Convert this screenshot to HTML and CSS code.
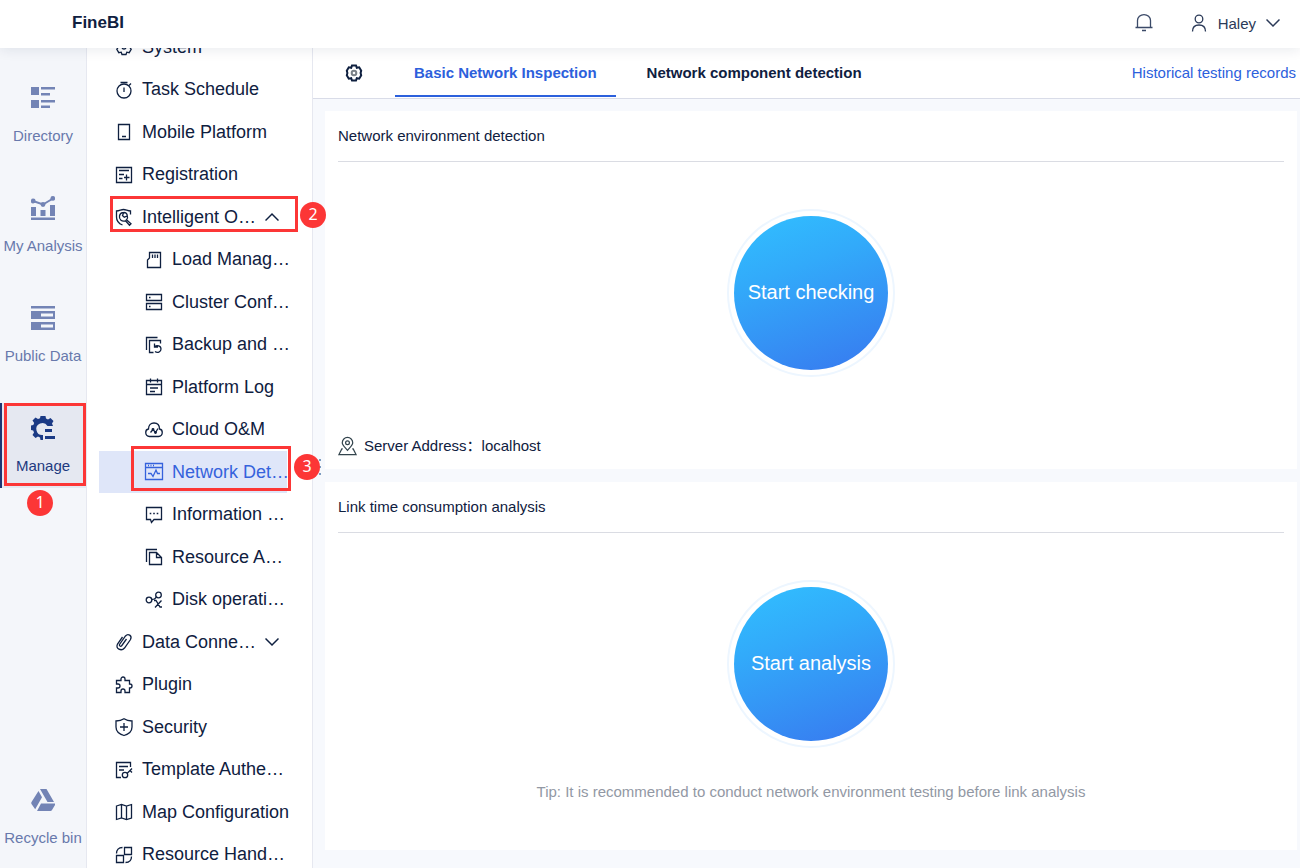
FILE: index.html
```html
<!DOCTYPE html>
<html lang="en">
<head>
  <meta charset="UTF-8">
  <meta name="viewport" content="width=device-width, initial-scale=1.0">
  <title>FineBI</title>
  <link rel="stylesheet" href="styles.css">
</head>
<body>
  <header class="header">
    <div class="brand">FineBI</div>
    <button class="bell" aria-label="Messages">
      <svg class="icon" viewBox="0 0 18 18"><path d="M2.500 13.500V6.500a6 5.500 0 0 1 13 0v7M.5 13.500h17M7 16.500h4"/></svg>
    </button>
    <button class="account">
      <svg class="icon" viewBox="0 0 18 18"><circle cx="9" cy="5" r="3.800"/><path d="M2.500 17.500c0-4 2.500-6.500 6.500-6.500s6.500 2.500 6.500 6.500"/></svg>
      <span>Haley</span>
      <svg class="arrow" viewBox="0 0 14 14"><path d="M.5 3.500 7 10l6.500-6.500"/></svg>
    </button>
  </header>

  <div class="page">
    <nav class="nav">
      <a class="nav-item" href="#directory">
        <svg viewBox="0 0 24 24"><path d="M0 1h8v8H0zM0 14h8v8H0zM10 1h14v2.500H10zM10 7h9v2.500h-9zM10 14h14v2.500H10zM10 19.500h9V22h-9z"/></svg>
        <span>Directory</span>
      </a>
      <a class="nav-item" href="#analysis">
        <svg viewBox="0 0 24 24"><path d="M0 11h5v9H0zM9.500 14h5v6h-5zM19 9h5v11h-5zM0 21.500h24V24H0z"/><circle cx="2.200" cy="5" r="2.400"/><circle cx="12" cy="8.500" r="2.400"/><circle cx="21.800" cy="2.400" r="2.400"/><path class="line" d="M2 5l10 3.500 10-6"/></svg>
        <span>My Analysis</span>
      </a>
      <a class="nav-item" href="#data">
        <svg viewBox="0 0 24 24"><path fill-rule="evenodd" d="M0 0h24v2.500H0zM0 5h24v8H0zM10 7.500v3h12v-3zM0 16h24v8H0zM10 18.500v3h12v-3z"/></svg>
        <span>Public Data</span>
      </a>
      <a class="nav-item active" href="#manage">
        <svg viewBox="0 0 24 24"><path d="M9.500 0h5l.5 2.500 2 1L19.500 2 22.500 5 21 7.500l1 2.500h-5.500a6 6 0 1 0-4.500 9v5H9.500L9 21.500l-2-1L4.500 22 1.500 19 3 16.500l-.8-2L0 14V9.500L2.300 9l.9-2L1.500 4.500l3-3L7 3l2-.8z"/><path d="M14 13h7v3h-7zM14 20h10v3H14z"/></svg>
        <span>Manage</span>
      </a>
      <a class="nav-item bottom" href="#recycle">
        <svg viewBox="0 0 24 24"><path d="M9 1h6.500L23 14h-6.500zM7.500 3l3.500 6.200-6.800 12L.5 16c-.4-.8-.4-1.200 0-2zM10 15.500h14v1.500l-3 5c-.4.700-.8 1-1.500 1H6z"/></svg>
        <span>Recycle bin</span>
      </a>
    </nav>

    <aside class="side">
      <ul class="menu">
        <li><a href="#system">
          <svg class="icon" viewBox="0 0 18 18"><path d="M7 1.500h4l.8 2.300 2.400-.5 2 3.400L14.600 9l1.600 2.300-2 3.400-2.400-.5L11 16.500H7l-.8-2.300-2.400.5-2-3.400L3.400 9 1.800 6.700l2-3.400 2.400.5z"/><circle cx="9" cy="9" r="2"/></svg>
          <span>System</span></a></li>
        <li><a href="#schedule">
          <svg class="icon" viewBox="0 0 18 18"><circle cx="9" cy="10" r="7"/><path d="M5.500 1.500h7M9 6.500v4.500M14 4.500l2-2"/></svg>
          <span>Task Schedule</span></a></li>
        <li><a href="#mobile">
          <svg class="icon" viewBox="0 0 18 18"><path d="M3.500 1.500h11v15h-11zM7 13.500h4"/></svg>
          <span>Mobile Platform</span></a></li>
        <li><a href="#registration">
          <svg class="icon" viewBox="0 0 18 18"><path d="M1.500 1.500h15v15h-15zM4 4.500h10M4 8.500h5M4 12.500h3.500M9 11.500h5.500M11.500 8.500v6"/></svg>
          <span>Registration</span></a></li>
        <li><button>
          <svg class="icon" viewBox="0 0 18 18"><path d="M15.500 6.500V3C12.500 3 11 1.500 8.500 1.500S4.500 3 1.500 3v6c0 4 2 6.500 6 8"/><path d="M8.700 4.500 7.500 7.500l1.800 1.700L12.300 8c.8 2-.2 3.300-.8 3.800l4.500 4-1.500 1.500-4-4.500C7 14 3.800 11.500 4.500 8c.4-2 2.200-3.500 4.200-3.500zM8.700 4.500c2-.2 3.500 1.200 3.600 3.500"/></svg>
          <span>Intelligent O…</span>
          <svg class="arrow" viewBox="0 0 14 14"><path d="M.5 10.500 7 4l6.500 6.500"/></svg></button></li>
        <li class="sub"><a href="#load">
          <svg class="icon" viewBox="0 0 18 18"><path d="M4.500 1.500h11v15h-13V9l2-2zM7.500 3.500V7M10 3.500V7M12.500 3.500V7"/></svg>
          <span>Load Manag…</span></a></li>
        <li class="sub"><a href="#cluster">
          <svg class="icon" viewBox="0 0 18 18"><path d="M1.500 1.500h15v6h-15zM1.500 10.500h15v6h-15zM4 4.500h1.500M4 13.500h1.500"/></svg>
          <span>Cluster Conf…</span></a></li>
        <li class="sub"><a href="#backup">
          <svg class="icon" viewBox="0 0 18 18"><path d="M1.500 14V1.500H12.500M8.500 16.500h-4v-12h11v3M9.500 7.500v3.500h3.500M9.800 10.800c2-2 6.200-1 6.200 2.200 0 3-3.500 4.500-6 2.500"/></svg>
          <span>Backup and …</span></a></li>
        <li class="sub"><a href="#log">
          <svg class="icon" viewBox="0 0 18 18"><path d="M1.500 2.500h15v14h-15zM1.500 6.500h15M5.500.5v4M12.500.5v4M5 10h8M5 13.500h5"/></svg>
          <span>Platform Log</span></a></li>
        <li class="sub"><a href="#cloud">
          <svg class="icon" viewBox="0 0 18 18"><path d="M4.500 15.500C-.5 15-.2 8.500 3.500 8 3.500 4 6 2 9 2s5.500 2 5.500 6c3.700.5 4 7-1 7.500zM5.500 11.500l2.500-3 2.500 3L13 7.500"/><circle cx="8" cy="8.500" r=".8"/><circle cx="10.500" cy="11.500" r=".8"/></svg>
          <span>Cloud O&amp;M</span></a></li>
        <li class="sub active"><a href="#network">
          <svg class="icon" viewBox="0 0 18 18"><path d="M.5.5h17v16H.5zM.5 4.500h17M3 2.500h1M5.500 2.500h1M8 2.500h1M3 10.500h3l2 3L11 7l1.500 3.500H15"/></svg>
          <span>Network Det…</span></a></li>
        <li class="sub"><a href="#information">
          <svg class="icon" viewBox="0 0 18 18"><path d="M1.500 1.500h15v12H9l-2.500 3-1-3h-4zM4.700 7.500h1.600M8.200 7.500h1.600M11.700 7.500h1.600"/></svg>
          <span>Information …</span></a></li>
        <li class="sub"><a href="#resource">
          <svg class="icon" viewBox="0 0 18 18"><path d="M1.500 14V1.500H12M4.500 4.500h7l5 5v7h-12zM11.500 4.500v5h5"/></svg>
          <span>Resource A…</span></a></li>
        <li class="sub"><a href="#disk">
          <svg class="icon" viewBox="0 0 18 18"><circle cx="4" cy="9" r="2.800"/><circle cx="13.500" cy="4" r="2.800"/><path d="M6.800 8.500c3 0 4-1 4.400-2.800M9 9.500h2l4 6.500h2M16.500 9.500 10 16.500"/></svg>
          <span>Disk operati…</span></a></li>
        <li><button>
          <svg class="icon" viewBox="0 0 18 18"><path d="M11.500 6l-5 7a1.300 1.300 0 0 1-2-1.500l6-8.500c2.500-3 7-.5 5 3.500l-6 8.500c-3 3.500-9.500 1-7-4l5-7"/></svg>
          <span>Data Conne…</span>
          <svg class="arrow" viewBox="0 0 14 14"><path d="M.5 3.500 7 10l6.500-6.500"/></svg></button></li>
        <li><a href="#plugin">
          <svg class="icon" viewBox="0 0 18 18"><path d="M1.500 4.500H6V3a2 2 0 0 1 4 0v1.500h4.500V8H15a2 2 0 0 1 0 4h-.5v4.500H10V15a2 2 0 0 0-4 0v1.500H1.500V12H3a2 2 0 0 0 0-4H1.500z"/></svg>
          <span>Plugin</span></a></li>
        <li><a href="#security">
          <svg class="icon" viewBox="0 0 18 18"><path d="M9 .8C6.500 2.500 4 3 1 3v6c0 4 3 7 8 8.500 5-1.500 8-4.500 8-8.500V3C14 3 11.500 2.500 9 .8zM5 9h8M9 5v8"/></svg>
          <span>Security</span></a></li>
        <li><a href="#template">
          <svg class="icon" viewBox="0 0 18 18"><path d="M15.500 6V1.500h-14v15H6M4 5.500h9M4 9h5M12 12.500l5-5M15 9.500l2 2"/><circle cx="10" cy="14" r="2.700"/></svg>
          <span>Template Authe…</span></a></li>
        <li><a href="#map">
          <svg class="icon" viewBox="0 0 18 18"><path d="M1.500 3l5-1.500 5 1.500 5-1.500V15l-5 1.500-5-1.500-5 1.500zM6.500 1.500V15M11.500 3v13.500"/></svg>
          <span>Map Configuration</span></a></li>
        <li><a href="#handover">
          <svg class="icon" viewBox="0 0 18 18"><path d="M9.500 1.500h7v7h-7zM1.500 9.500h7v7h-7zM1.500 7.500c0-3.500 2-6 6-6M16.500 10.500c0 3.500-2 6-6 6"/></svg>
          <span>Resource Hand…</span></a></li>
      </ul>
    </aside>

    <main class="main">
      <div class="tabs">
        <button class="setting" aria-label="Settings">
          <svg class="icon" viewBox="0 0 18 18"><path d="M7 1.500h4l.8 2.300 2.400-.5 2 3.400L15.600 9l.6 2.300-2 3.400-2.400-.5L11 16.500H7l-.8-2.300-2.400.5-2-3.400L2.400 9l-.6-2.300 2-3.400 2.400.5z"/><circle class="hole" cx="9" cy="9" r="2.300"/></svg>
        </button>
        <button class="tab active">Basic Network Inspection</button>
        <button class="tab">Network component detection</button>
        <a class="history" href="#records">Historical testing records</a>
      </div>
      <section class="card">
        <h2>Network environment detection</h2>
        <button class="circle"><span>Start checking</span></button>
        <div class="server">
          <svg class="icon" viewBox="0 0 20 20"><path d="M10 14C6.500 10 4.500 8.500 4.500 6a5.500 5.500 0 0 1 11 0c0 2.500-2 4-5.500 8zM5 12.500H4L1 18.500h18l-3-6h-1"/><circle cx="10" cy="6" r="2"/></svg>
          <span>Server Address：localhost</span>
        </div>
      </section>
      <section class="card">
        <h2>Link time consumption analysis</h2>
        <button class="circle"><span>Start analysis</span></button>
        <p class="tip">Tip: It is recommended to conduct network environment testing before link analysis</p>
      </section>
    </main>
  </div>

  <!-- step marks -->
  <div class="drag"><i></i><i></i><i></i></div>
  <div class="mark mark-manage"></div>
  <div class="mark mark-intelligent"></div>
  <div class="mark mark-network"></div>
  <div class="step step-1">1</div>
  <div class="step step-2">2</div>
  <div class="step step-3">3</div>
</body>
</html>
```
FILE: styles.css
```css
* {
  box-sizing: border-box;
  margin: 0;
  padding: 0;
}
html, body {
  height: 100%;
}
body {
  position: relative;
  display: flex;
  flex-direction: column;
  overflow: hidden;
  font-family: "Liberation Sans", Arial, "Noto Sans CJK SC", sans-serif;
  font-size: 15px;
  color: #0f2040;
  background: #fff;
}
button {
  border: none;
  background: none;
  font: inherit;
  color: inherit;
  cursor: pointer;
}
a {
  color: inherit;
  text-decoration: none;
}
ul {
  list-style: none;
}
svg {
  flex: none;
  display: block;
}
.icon {
  width: 18px;
  height: 18px;
  overflow: visible;
  fill: none;
  stroke: currentColor;
  stroke-width: 1.3;
}
.arrow {
  width: 14px;
  height: 14px;
  fill: none;
  stroke: currentColor;
  stroke-width: 1.5;
}

.header {
  position: relative;
  z-index: 2;
  flex: none;
  display: flex;
  align-items: center;
  height: 48px;
  padding: 0 20px 2px 72px;
  background: #fff;
  box-shadow: 0 2px 12px rgba(15, 32, 64, 0.09);
}
.brand {
  flex: 1;
  font-size: 17px;
  font-weight: bold;
}
.bell {
  margin-right: 37px;
  color: #3b4a68;
}
.account {
  display: flex;
  align-items: center;
  gap: 10px;
  color: #2b3a58;
}

.page {
  flex: 1;
  min-height: 0;
  display: flex;
}
.nav {
  flex: none;
  display: flex;
  flex-direction: column;
  gap: 25px;
  width: 87px;
  padding: 25px 0 8px;
  background: #f4f6fa;
  border-right: 1px solid #e6e8f0;
}
.nav-item {
  display: flex;
  flex-direction: column;
  align-items: center;
  gap: 16px;
  height: 85px;
  padding-top: 13px;
  line-height: 20px;
  white-space: nowrap;
  color: #6879ac;
}
.nav-item svg {
  width: 24px;
  height: 24px;
  fill: #7384b5;
}
.nav-item .line {
  fill: none;
  stroke: #7384b5;
  stroke-width: 2;
}
.nav-item.active {
  color: #1e3a80;
  background: #e5e8f1;
  box-shadow: inset 2px 0 #1e3573;
}
.nav-item.active svg {
  fill: #1b3a85;
}
.nav-item.bottom {
  margin-top: auto;
}

.side {
  flex: none;
  width: 226px;
  overflow: hidden;
  border-right: 1px solid #e6e8f0;
}
/* the list is scrolled a little, the first row is half under the header */
.menu {
  margin: -22px 25px 0 12px;
}
.menu li {
  height: 43px;
  font-size: 18px;
}
.menu li:nth-child(odd) {
  height: 42px;
}
.menu a, .menu button {
  display: flex;
  align-items: center;
  gap: 9px;
  width: 100%;
  height: 100%;
  padding-left: 16px;
  white-space: nowrap;
}
.menu .sub a {
  padding-left: 46px;
}
.menu .arrow {
  margin: 0 8px 0 auto;
}
.menu .active {
  color: #3562dc;
  background: #dfe6f9;
}

.main {
  flex: 1;
  min-width: 0;
  background: #f7f9fd;
}
.tabs {
  display: flex;
  height: 51px;
  padding: 0 4px 0 32px;
  background: #fff;
  border-bottom: 1px solid #d9dce8;
}
.setting {
  margin-right: 32px;
}
.setting .icon {
  stroke-width: 2;
}
.setting .hole {
  stroke: #7b8288;
}
.tab {
  margin: 0 12px 1px 0;
  padding: 0 19px;
  font-weight: bold;
  white-space: nowrap;
  border-top: 2px solid transparent;
  border-bottom: 2px solid transparent;
}
.tab.active {
  color: #2c60dc;
  border-bottom-color: #2c60dc;
}
.history {
  margin-left: auto;
  line-height: 49px;
  white-space: nowrap;
  color: #2c60dc;
}

.card {
  display: flex;
  flex-direction: column;
  margin: 12px 3px 0 12px;
  padding: 0 13px 12px;
  background: #fff;
}
.card + .card {
  margin-top: 13px;
  padding-bottom: 47px;
}
.card h2 {
  font-size: 15px;
  font-weight: normal;
  line-height: 50px;
  border-bottom: 1px solid #dadce3;
}
.circle {
  align-self: center;
  width: 168px;
  height: 168px;
  margin-top: 47px;
  padding: 5px;
  border: 2px solid #edf6ff;
  border-radius: 50%;
}
.circle span {
  display: block;
  padding-bottom: 2px;
  border-radius: 50%;
  font-size: 20px;
  line-height: 152px;
  color: #fff;
  background: linear-gradient(160deg, #31c0ff, #32aafa 35%, #3878ef);
}
.server {
  display: flex;
  align-items: center;
  gap: 7px;
  height: 22px;
  margin-top: 58px;
  line-height: 22px;
}
.server .icon {
  width: 19px;
  height: 19px;
  color: #33444d;
}
.tip {
  margin-top: 33px;
  line-height: 22px;
  text-align: center;
  color: #9298a4;
}

.drag {
  position: absolute;
  z-index: 3;
  left: 319px;
  top: 459px;
  display: flex;
  flex-direction: column;
  gap: 5px;
}
.drag i {
  width: 2px;
  height: 2px;
  background: #7d9cc0;
}
.mark {
  position: absolute;
  z-index: 3;
  border: 3px solid #fc3636;
  pointer-events: none;
}
.mark-manage {
  left: 4px;
  top: 403px;
  width: 82px;
  height: 83px;
}
.mark-intelligent {
  left: 110px;
  top: 196px;
  width: 188px;
  height: 36px;
}
.mark-network {
  left: 131px;
  top: 446px;
  width: 160px;
  height: 45px;
}
.step {
  position: absolute;
  z-index: 4;
  width: 26px;
  height: 26px;
  border-radius: 50%;
  font-family: "Noto Sans", sans-serif;
  font-size: 16px;
  line-height: 25px;
  text-align: center;
  color: #fff;
  background: #fc3636;
}
.step-1 {
  left: 27px;
  top: 490px;
}
.step-2 {
  left: 300px;
  top: 202px;
}
.step-3 {
  left: 294px;
  top: 454px;
}
```
